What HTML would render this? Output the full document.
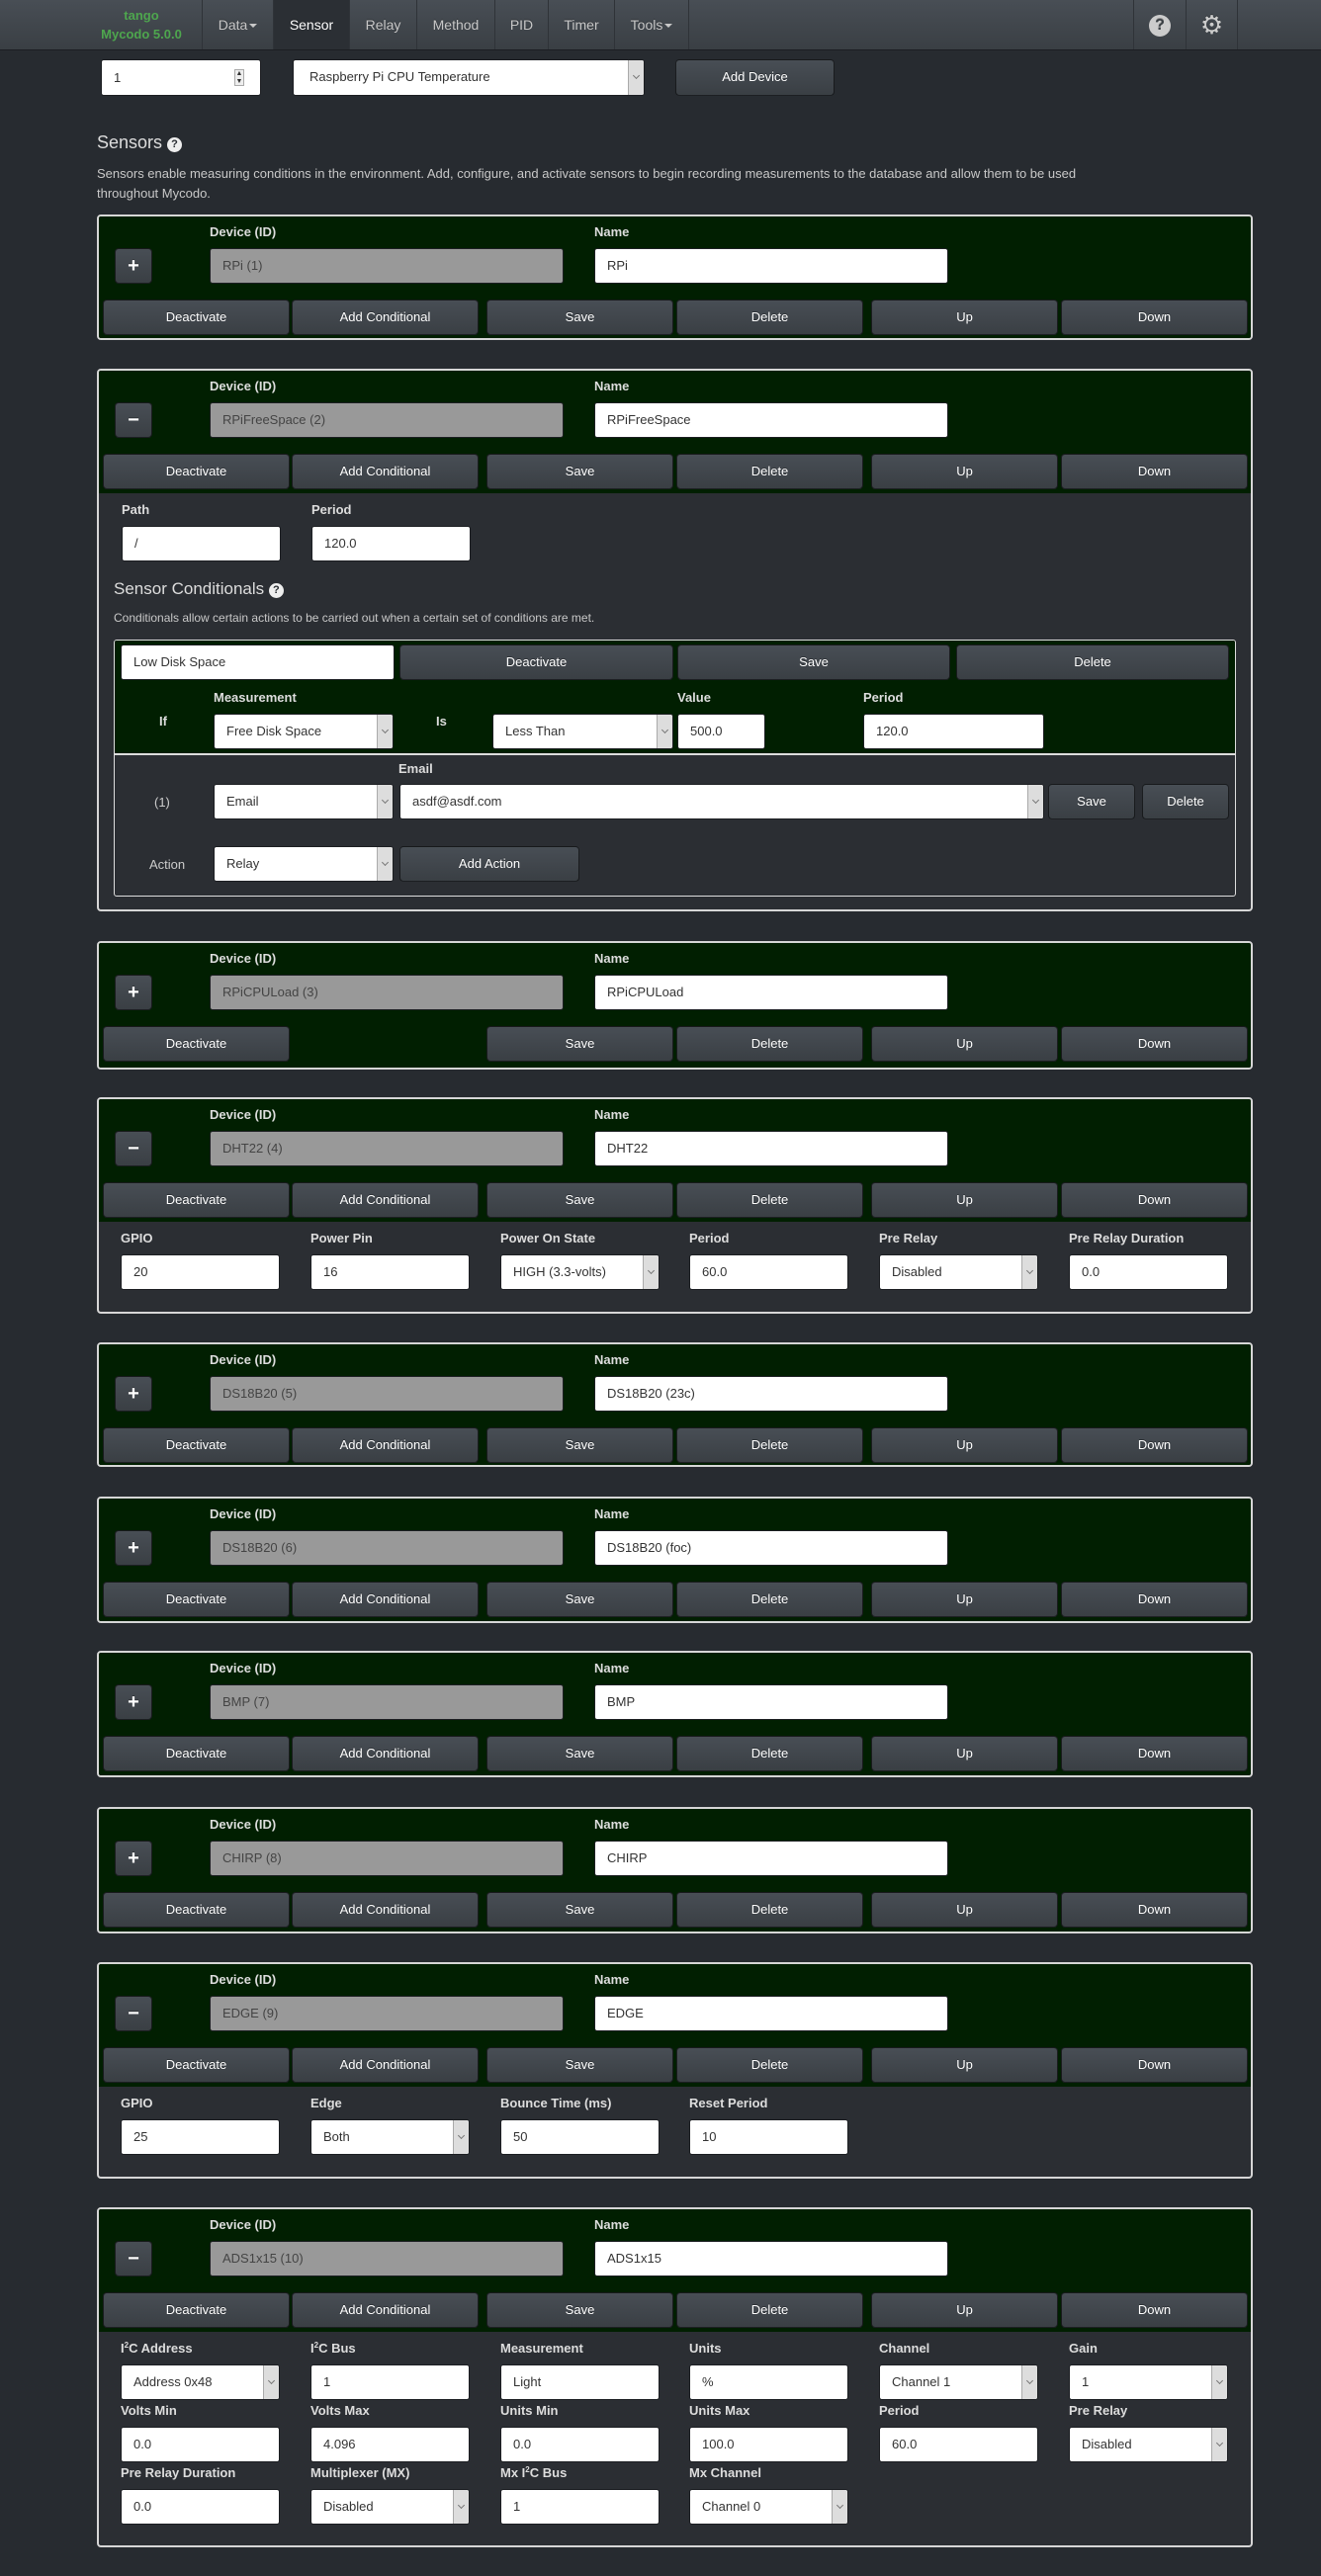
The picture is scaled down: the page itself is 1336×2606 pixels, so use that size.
<!DOCTYPE html>
<html><head><meta charset="utf-8">
<style>
*{box-sizing:border-box}
body{margin:0;width:1336px;height:2606px;background:#272b30;font-family:"Liberation Sans",sans-serif;font-size:13px;color:#c8c8c8;position:relative;overflow:hidden}
.nav{position:absolute;left:0;top:0;width:1336px;height:51px;background:linear-gradient(#484e55,#3a3f44);border-bottom:1px solid #1c1e22}
.ni{position:absolute;top:0;height:50px;line-height:50px;text-align:center;font-size:14px;color:#c8c8c8;border-left:1px solid #2f3338;text-shadow:0 -1px 0 rgba(0,0,0,.3)}
.act{background:#2b2f34;color:#fff}
.car{display:inline-block;border-top:4px solid #c8c8c8;border-left:4px solid transparent;border-right:4px solid transparent;vertical-align:middle;margin-left:2px}
.brand{position:absolute;left:90px;top:6px;width:106px;text-align:center;color:#4ea64e;font-weight:bold;font-size:13px;line-height:19px}
.a{position:absolute}
.lb{position:absolute;font-weight:bold;font-size:13px;color:#ddd;line-height:16px}
.lb sup{font-size:8px;line-height:0;vertical-align:5px}
.in{position:absolute;height:36px;background:#fff;border:1px solid #1c1e22;border-radius:3px;padding-left:12px;line-height:34px;font-size:13px;color:#333;white-space:nowrap;overflow:hidden}
.dis{background:#999;color:#444}
.s .ar{position:absolute;right:0;top:0;width:16px;height:34px;background:#ddd;border-left:1px solid #aaa}
.s .ar:after{content:"";position:absolute;left:5px;top:13px;width:4px;height:4px;border-right:1px solid #777;border-bottom:1px solid #777;transform:rotate(45deg)}
.b{position:absolute;height:36px;background:linear-gradient(#484e55,#3a3f44);border:1px solid rgba(0,0,0,.6);border-radius:4px;color:#fff;text-align:center;line-height:34px;font-size:13px;text-shadow:0 -1px 0 rgba(0,0,0,.3)}
.t{font-size:20px;font-weight:bold}
.p{position:absolute;left:98px;width:1169px;border:2px solid #d6d6d6;border-radius:4px;background:#2b2e33;overflow:hidden}
.g{position:absolute;left:0;top:0;width:100%;height:124px;background:#011f01}
.q{display:inline-block;width:15px;height:15px;border-radius:50%;background:#eee;color:#272b30;font-size:11px;font-weight:bold;text-align:center;line-height:15px;vertical-align:1px}
</style></head><body>

<div class="nav">
<div class="brand">tango<br>Mycodo 5.0.0</div>
<div class="ni" style="left:204px;width:72px">Data<span class="car"></span></div>
<div class="ni act" style="left:276px;width:77px">Sensor</div>
<div class="ni" style="left:353px;width:68px">Relay</div>
<div class="ni" style="left:421px;width:79px">Method</div>
<div class="ni" style="left:500px;width:54px">PID</div>
<div class="ni" style="left:554px;width:67px">Timer</div>
<div class="ni" style="left:621px;width:76px;border-right:1px solid #2f3338">Tools<span class="car"></span></div>
<div class="ni" style="left:1146px;width:53px"><span style="display:inline-block;width:22px;height:22px;border-radius:50%;background:#ccc;color:#3a3f44;font-weight:bold;font-size:16px;line-height:22px;vertical-align:middle">?</span></div>
<div class="ni" style="left:1199px;width:53px;border-right:1px solid #2f3338;font-size:26px;color:#ccc">⚙</div>
</div>

<div class="in" style="left:102px;top:60px;width:162px;height:37px;line-height:35px">1<span style="position:absolute;right:16px;top:9px;width:10px;height:17px;border:1px solid #aaa;background:#eee;font-size:7px;line-height:8px;text-align:center;color:#333">▲<br>▼</span></div>
<div class="in s" style="left:296px;top:60px;width:356px;height:37px;padding-left:16px">Raspberry Pi CPU Temperature<span class="ar" style="height:35px"></span></div>
<div class="b" style="left:683px;top:60px;width:161px;height:37px">Add Device</div>

<div class="a" style="left:98px;top:134px;font-size:18px;color:#ddd">Sensors <span class="q">?</span></div>
<div class="a" style="left:98px;top:166px;line-height:20px;font-size:13px;color:#c8c8c8">Sensors enable measuring conditions in the environment. Add, configure, and activate sensors to begin recording measurements to the database and allow them to be used<br>throughout Mycodo.</div>

<!-- Panel 1 -->
<div class="p" style="top:217px;height:127px"><div class="g" style="height:100%"></div>
<div class="b t" style="left:16px;top:32px;width:38px">+</div>
<div class="lb" style="left:112px;top:8px">Device (ID)</div><div class="in dis" style="left:112px;top:32px;width:358px">RPi (1)</div>
<div class="lb" style="left:501px;top:8px">Name</div><div class="in" style="left:501px;top:32px;width:358px">RPi</div>
<div class="b" style="left:4px;top:84px;width:189px">Deactivate</div><div class="b" style="left:195px;top:84px;width:189px">Add Conditional</div>
<div class="b" style="left:392px;top:84px;width:189px">Save</div><div class="b" style="left:584px;top:84px;width:189px">Delete</div>
<div class="b" style="left:781px;top:84px;width:189px">Up</div><div class="b" style="left:973px;top:84px;width:189px">Down</div>
</div>

<!-- Panel 2 -->
<div class="p" style="top:373px;height:549px"><div class="g"></div>
<div class="b t" style="left:16px;top:32px;width:38px">−</div>
<div class="lb" style="left:112px;top:8px">Device (ID)</div><div class="in dis" style="left:112px;top:32px;width:358px">RPiFreeSpace (2)</div>
<div class="lb" style="left:501px;top:8px">Name</div><div class="in" style="left:501px;top:32px;width:358px">RPiFreeSpace</div>
<div class="b" style="left:4px;top:84px;width:189px">Deactivate</div><div class="b" style="left:195px;top:84px;width:189px">Add Conditional</div>
<div class="b" style="left:392px;top:84px;width:189px">Save</div><div class="b" style="left:584px;top:84px;width:189px">Delete</div>
<div class="b" style="left:781px;top:84px;width:189px">Up</div><div class="b" style="left:973px;top:84px;width:189px">Down</div>
<div class="lb" style="left:23px;top:133px">Path</div><div class="in" style="left:23px;top:157px;width:161px">/</div>
<div class="lb" style="left:215px;top:133px">Period</div><div class="in" style="left:215px;top:157px;width:161px">120.0</div>
<div class="a" style="left:15px;top:211px;font-size:17px;color:#ddd">Sensor Conditionals <span class="q">?</span></div>
<div class="a" style="left:15px;top:243px;font-size:12px;color:#c8c8c8">Conditionals allow certain actions to be carried out when a certain set of conditions are met.</div>
<div class="a" style="left:15px;top:272px;width:1135px;height:260px;border:1px solid #ddd;border-radius:3px;overflow:hidden">
 <div class="a" style="left:0;top:0;width:100%;height:116px;background:#011f01;border-bottom:2px solid #ddd"></div>
 <div class="in" style="left:6px;top:4px;width:277px">Low Disk Space</div>
 <div class="b" style="left:288px;top:4px;width:277px">Deactivate</div>
 <div class="b" style="left:569px;top:4px;width:276px">Save</div>
 <div class="b" style="left:851px;top:4px;width:276px">Delete</div>
 <div class="lb" style="left:100px;top:50px">Measurement</div>
 <div class="lb" style="left:569px;top:50px">Value</div>
 <div class="lb" style="left:757px;top:50px">Period</div>
 <div class="lb" style="left:45px;top:74px">If</div>
 <div class="in s" style="left:100px;top:74px;width:182px">Free Disk Space<span class="ar"></span></div>
 <div class="lb" style="left:325px;top:74px">Is</div>
 <div class="in s" style="left:382px;top:74px;width:183px">Less Than<span class="ar"></span></div>
 <div class="in" style="left:569px;top:74px;width:89px">500.0</div>
 <div class="in" style="left:757px;top:74px;width:183px">120.0</div>
 <div class="lb" style="left:287px;top:122px">Email</div>
 <div class="a" style="left:40px;top:156px;color:#ccc">(1)</div>
 <div class="in s" style="left:100px;top:145px;width:182px">Email<span class="ar"></span></div>
 <div class="in s" style="left:288px;top:145px;width:652px">asdf@asdf.com<span class="ar"></span></div>
 <div class="b" style="left:944px;top:145px;width:88px">Save</div>
 <div class="b" style="left:1039px;top:145px;width:88px">Delete</div>
 <div class="a" style="left:35px;top:219px;color:#ccc">Action</div>
 <div class="in s" style="left:100px;top:208px;width:182px">Relay<span class="ar"></span></div>
 <div class="b" style="left:288px;top:208px;width:182px">Add Action</div>
</div>
</div>

<!-- Panel 3 -->
<div class="p" style="top:952px;height:130px"><div class="g" style="height:100%"></div>
<div class="b t" style="left:16px;top:32px;width:38px">+</div>
<div class="lb" style="left:112px;top:8px">Device (ID)</div><div class="in dis" style="left:112px;top:32px;width:358px">RPiCPULoad (3)</div>
<div class="lb" style="left:501px;top:8px">Name</div><div class="in" style="left:501px;top:32px;width:358px">RPiCPULoad</div>
<div class="b" style="left:4px;top:84px;width:189px">Deactivate</div>
<div class="b" style="left:392px;top:84px;width:189px">Save</div><div class="b" style="left:584px;top:84px;width:189px">Delete</div>
<div class="b" style="left:781px;top:84px;width:189px">Up</div><div class="b" style="left:973px;top:84px;width:189px">Down</div>
</div>

<!-- Panel 4 -->
<div class="p" style="top:1110px;height:219px"><div class="g"></div>
<div class="b t" style="left:16px;top:32px;width:38px">−</div>
<div class="lb" style="left:112px;top:8px">Device (ID)</div><div class="in dis" style="left:112px;top:32px;width:358px">DHT22 (4)</div>
<div class="lb" style="left:501px;top:8px">Name</div><div class="in" style="left:501px;top:32px;width:358px">DHT22</div>
<div class="b" style="left:4px;top:84px;width:189px">Deactivate</div><div class="b" style="left:195px;top:84px;width:189px">Add Conditional</div>
<div class="b" style="left:392px;top:84px;width:189px">Save</div><div class="b" style="left:584px;top:84px;width:189px">Delete</div>
<div class="b" style="left:781px;top:84px;width:189px">Up</div><div class="b" style="left:973px;top:84px;width:189px">Down</div>
<div class="lb" style="left:22px;top:133px">GPIO</div><div class="in" style="left:22px;top:157px;width:161px">20</div>
<div class="lb" style="left:214px;top:133px">Power Pin</div><div class="in" style="left:214px;top:157px;width:161px">16</div>
<div class="lb" style="left:406px;top:133px">Power On State</div><div class="in s" style="left:406px;top:157px;width:161px">HIGH (3.3-volts)<span class="ar"></span></div>
<div class="lb" style="left:597px;top:133px">Period</div><div class="in" style="left:597px;top:157px;width:161px">60.0</div>
<div class="lb" style="left:789px;top:133px">Pre Relay</div><div class="in s" style="left:789px;top:157px;width:161px">Disabled<span class="ar"></span></div>
<div class="lb" style="left:981px;top:133px">Pre Relay Duration</div><div class="in" style="left:981px;top:157px;width:161px">0.0</div>
</div>

<!-- Panel 5 -->
<div class="p" style="top:1358px;height:126px"><div class="g" style="height:100%"></div>
<div class="b t" style="left:16px;top:32px;width:38px">+</div>
<div class="lb" style="left:112px;top:8px">Device (ID)</div><div class="in dis" style="left:112px;top:32px;width:358px">DS18B20 (5)</div>
<div class="lb" style="left:501px;top:8px">Name</div><div class="in" style="left:501px;top:32px;width:358px">DS18B20 (23c)</div>
<div class="b" style="left:4px;top:84px;width:189px">Deactivate</div><div class="b" style="left:195px;top:84px;width:189px">Add Conditional</div>
<div class="b" style="left:392px;top:84px;width:189px">Save</div><div class="b" style="left:584px;top:84px;width:189px">Delete</div>
<div class="b" style="left:781px;top:84px;width:189px">Up</div><div class="b" style="left:973px;top:84px;width:189px">Down</div>
</div>

<!-- Panel 6 -->
<div class="p" style="top:1514px;height:128px"><div class="g" style="height:100%"></div>
<div class="b t" style="left:16px;top:32px;width:38px">+</div>
<div class="lb" style="left:112px;top:8px">Device (ID)</div><div class="in dis" style="left:112px;top:32px;width:358px">DS18B20 (6)</div>
<div class="lb" style="left:501px;top:8px">Name</div><div class="in" style="left:501px;top:32px;width:358px">DS18B20 (foc)</div>
<div class="b" style="left:4px;top:84px;width:189px">Deactivate</div><div class="b" style="left:195px;top:84px;width:189px">Add Conditional</div>
<div class="b" style="left:392px;top:84px;width:189px">Save</div><div class="b" style="left:584px;top:84px;width:189px">Delete</div>
<div class="b" style="left:781px;top:84px;width:189px">Up</div><div class="b" style="left:973px;top:84px;width:189px">Down</div>
</div>

<!-- Panel 7 -->
<div class="p" style="top:1670px;height:128px"><div class="g" style="height:100%"></div>
<div class="b t" style="left:16px;top:32px;width:38px">+</div>
<div class="lb" style="left:112px;top:8px">Device (ID)</div><div class="in dis" style="left:112px;top:32px;width:358px">BMP (7)</div>
<div class="lb" style="left:501px;top:8px">Name</div><div class="in" style="left:501px;top:32px;width:358px">BMP</div>
<div class="b" style="left:4px;top:84px;width:189px">Deactivate</div><div class="b" style="left:195px;top:84px;width:189px">Add Conditional</div>
<div class="b" style="left:392px;top:84px;width:189px">Save</div><div class="b" style="left:584px;top:84px;width:189px">Delete</div>
<div class="b" style="left:781px;top:84px;width:189px">Up</div><div class="b" style="left:973px;top:84px;width:189px">Down</div>
</div>

<!-- Panel 8 -->
<div class="p" style="top:1828px;height:128px"><div class="g" style="height:100%"></div>
<div class="b t" style="left:16px;top:32px;width:38px">+</div>
<div class="lb" style="left:112px;top:8px">Device (ID)</div><div class="in dis" style="left:112px;top:32px;width:358px">CHIRP (8)</div>
<div class="lb" style="left:501px;top:8px">Name</div><div class="in" style="left:501px;top:32px;width:358px">CHIRP</div>
<div class="b" style="left:4px;top:84px;width:189px">Deactivate</div><div class="b" style="left:195px;top:84px;width:189px">Add Conditional</div>
<div class="b" style="left:392px;top:84px;width:189px">Save</div><div class="b" style="left:584px;top:84px;width:189px">Delete</div>
<div class="b" style="left:781px;top:84px;width:189px">Up</div><div class="b" style="left:973px;top:84px;width:189px">Down</div>
</div>

<!-- Panel 9 -->
<div class="p" style="top:1985px;height:219px"><div class="g"></div>
<div class="b t" style="left:16px;top:32px;width:38px">−</div>
<div class="lb" style="left:112px;top:8px">Device (ID)</div><div class="in dis" style="left:112px;top:32px;width:358px">EDGE (9)</div>
<div class="lb" style="left:501px;top:8px">Name</div><div class="in" style="left:501px;top:32px;width:358px">EDGE</div>
<div class="b" style="left:4px;top:84px;width:189px">Deactivate</div><div class="b" style="left:195px;top:84px;width:189px">Add Conditional</div>
<div class="b" style="left:392px;top:84px;width:189px">Save</div><div class="b" style="left:584px;top:84px;width:189px">Delete</div>
<div class="b" style="left:781px;top:84px;width:189px">Up</div><div class="b" style="left:973px;top:84px;width:189px">Down</div>
<div class="lb" style="left:22px;top:133px">GPIO</div><div class="in" style="left:22px;top:157px;width:161px">25</div>
<div class="lb" style="left:214px;top:133px">Edge</div><div class="in s" style="left:214px;top:157px;width:161px">Both<span class="ar"></span></div>
<div class="lb" style="left:406px;top:133px">Bounce Time (ms)</div><div class="in" style="left:406px;top:157px;width:161px">50</div>
<div class="lb" style="left:597px;top:133px">Reset Period</div><div class="in" style="left:597px;top:157px;width:161px">10</div>
</div>

<!-- Panel 10 -->
<div class="p" style="top:2233px;height:344px"><div class="g"></div>
<div class="b t" style="left:16px;top:32px;width:38px">−</div>
<div class="lb" style="left:112px;top:8px">Device (ID)</div><div class="in dis" style="left:112px;top:32px;width:358px">ADS1x15 (10)</div>
<div class="lb" style="left:501px;top:8px">Name</div><div class="in" style="left:501px;top:32px;width:358px">ADS1x15</div>
<div class="b" style="left:4px;top:84px;width:189px">Deactivate</div><div class="b" style="left:195px;top:84px;width:189px">Add Conditional</div>
<div class="b" style="left:392px;top:84px;width:189px">Save</div><div class="b" style="left:584px;top:84px;width:189px">Delete</div>
<div class="b" style="left:781px;top:84px;width:189px">Up</div><div class="b" style="left:973px;top:84px;width:189px">Down</div>
<div class="lb" style="left:22px;top:133px">I<sup>2</sup>C Address</div><div class="in s" style="left:22px;top:157px;width:161px">Address 0x48<span class="ar"></span></div>
<div class="lb" style="left:214px;top:133px">I<sup>2</sup>C Bus</div><div class="in" style="left:214px;top:157px;width:161px">1</div>
<div class="lb" style="left:406px;top:133px">Measurement</div><div class="in" style="left:406px;top:157px;width:161px">Light</div>
<div class="lb" style="left:597px;top:133px">Units</div><div class="in" style="left:597px;top:157px;width:161px">%</div>
<div class="lb" style="left:789px;top:133px">Channel</div><div class="in s" style="left:789px;top:157px;width:161px">Channel 1<span class="ar"></span></div>
<div class="lb" style="left:981px;top:133px">Gain</div><div class="in s" style="left:981px;top:157px;width:161px">1<span class="ar"></span></div>
<div class="lb" style="left:22px;top:196px">Volts Min</div><div class="in" style="left:22px;top:220px;width:161px">0.0</div>
<div class="lb" style="left:214px;top:196px">Volts Max</div><div class="in" style="left:214px;top:220px;width:161px">4.096</div>
<div class="lb" style="left:406px;top:196px">Units Min</div><div class="in" style="left:406px;top:220px;width:161px">0.0</div>
<div class="lb" style="left:597px;top:196px">Units Max</div><div class="in" style="left:597px;top:220px;width:161px">100.0</div>
<div class="lb" style="left:789px;top:196px">Period</div><div class="in" style="left:789px;top:220px;width:161px">60.0</div>
<div class="lb" style="left:981px;top:196px">Pre Relay</div><div class="in s" style="left:981px;top:220px;width:161px">Disabled<span class="ar"></span></div>
<div class="lb" style="left:22px;top:259px">Pre Relay Duration</div><div class="in" style="left:22px;top:283px;width:161px">0.0</div>
<div class="lb" style="left:214px;top:259px">Multiplexer (MX)</div><div class="in s" style="left:214px;top:283px;width:161px">Disabled<span class="ar"></span></div>
<div class="lb" style="left:406px;top:259px">Mx I<sup>2</sup>C Bus</div><div class="in" style="left:406px;top:283px;width:161px">1</div>
<div class="lb" style="left:597px;top:259px">Mx Channel</div><div class="in s" style="left:597px;top:283px;width:161px">Channel 0<span class="ar"></span></div>
</div>

</body></html>
